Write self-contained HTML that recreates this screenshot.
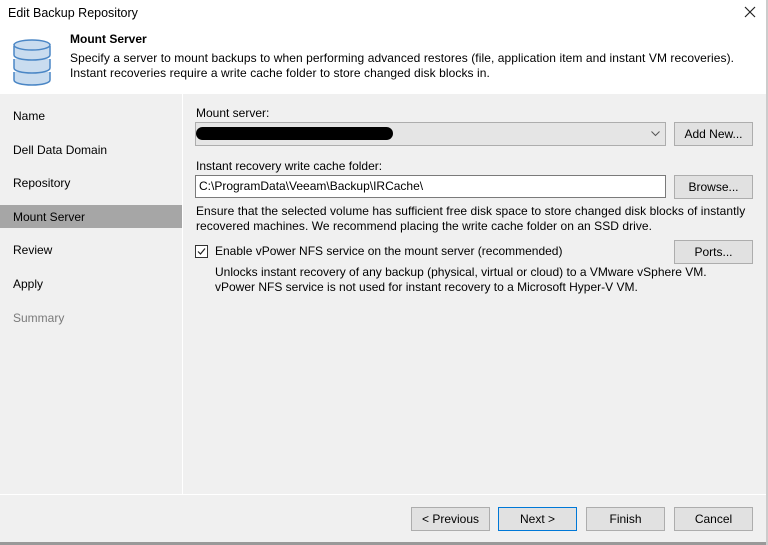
<!DOCTYPE html>
<html><head><style>
body{margin:0;width:768px;height:545px;overflow:hidden;background:#fff;font-family:"Liberation Sans",sans-serif;font-size:12px;color:#000;position:relative}
.a{position:absolute;white-space:nowrap}
.btn{position:absolute;background:#e1e1e1;border:1px solid #adadad;box-sizing:border-box;text-align:center;font-size:12px;line-height:22px}
</style></head><body>
<div class="a" style="left:8px;top:6px;font-size:12.5px">Edit Backup Repository</div>
<svg class="a" style="left:744px;top:6px" width="12" height="12" viewBox="0 0 12 12"><path d="M1 1L11 11M11 1L1 11" stroke="#222" stroke-width="1.2"/></svg>
<svg class="a" style="left:12px;top:38px" width="40" height="50" viewBox="0 0 40 50">
<g fill="#c9dcef" stroke="#4a86c5" stroke-width="1.5">
<path d="M2 34v8c0 3 8 5 18 5s18-2 18-5v-8"/>
<path d="M2 21v9c0 3 8 5 18 5s18-2 18-5v-9"/>
<path d="M2 8v9c0 3 8 5 18 5s18-2 18-5V8"/>
<ellipse cx="20" cy="7" rx="18" ry="5"/>
</g></svg>
<div class="a" style="left:70px;top:32px;font-weight:bold">Mount Server</div>
<div class="a" style="left:70px;top:51px;letter-spacing:0.08px">Specify a server to mount backups to when performing advanced restores (file, application item and instant VM recoveries).</div>
<div class="a" style="left:70px;top:66px;letter-spacing:0.08px">Instant recoveries require a write cache folder to store changed disk blocks in.</div>
<div class="a" style="left:0;top:94px;width:766px;height:448px;background:#f0f0f0"></div>
<div class="a" style="left:182px;top:94px;width:1px;height:400px;background:#fff"></div>
<div class="a" style="left:0;top:494px;width:766px;height:1px;background:#fff"></div>
<div class="a" style="left:0;top:542px;width:768px;height:3px;background:#999"></div>
<div class="a" style="left:766px;top:0;width:2px;height:545px;background:#ccc"></div>
<div class="a" style="left:0;top:205px;width:182px;height:23px;background:#a6a6a6"></div>
<div class="a" style="left:13px;top:109px">Name</div>
<div class="a" style="left:13px;top:143px">Dell Data Domain</div>
<div class="a" style="left:13px;top:176px">Repository</div>
<div class="a" style="left:13px;top:210px">Mount Server</div>
<div class="a" style="left:13px;top:243px">Review</div>
<div class="a" style="left:13px;top:277px">Apply</div>
<div class="a" style="left:13px;top:311px;color:#7a7a7a">Summary</div>
<div class="a" style="left:196px;top:106px">Mount server:</div>
<div class="a" style="left:195px;top:122px;width:471px;height:24px;background:#e5e5e5;border:1px solid #adadad;box-sizing:border-box"></div>
<div class="a" style="left:196px;top:127px;width:197px;height:13px;background:#000;border-radius:7px"></div>
<svg class="a" style="left:651px;top:131px" width="9" height="6" viewBox="0 0 9 6"><path d="M0.5 0.5L4.5 4.5L8.5 0.5" fill="none" stroke="#555"/></svg>
<div class="btn" style="left:674px;top:122px;width:79px;height:24px">Add New...</div>
<div class="a" style="left:196px;top:159px">Instant recovery write cache folder:</div>
<div class="a" style="left:195px;top:175px;width:471px;height:23px;background:#fff;border:1px solid #7a7a7a;box-sizing:border-box;padding:3px 3px;line-height:15px">C:\ProgramData\Veeam\Backup\IRCache\</div>
<div class="btn" style="left:674px;top:175px;width:79px;height:24px">Browse...</div>
<div class="a" style="left:196px;top:204px;letter-spacing:0.05px">Ensure that the selected volume has sufficient free disk space to store changed disk blocks of instantly</div>
<div class="a" style="left:196px;top:219px;letter-spacing:0.05px">recovered machines. We recommend placing the write cache folder on an SSD drive.</div>
<div class="a" style="left:195px;top:245px;width:13px;height:13px;border:1px solid #333;background:#fff;box-sizing:border-box"></div>
<svg class="a" style="left:197px;top:247px" width="9" height="9" viewBox="0 0 9 9"><path d="M1 4.5L3.5 7L8 1.5" fill="none" stroke="#222" stroke-width="1.2"/></svg>
<div class="a" style="left:215px;top:244px">Enable vPower NFS service on the mount server (recommended)</div>
<div class="btn" style="left:674px;top:240px;width:79px;height:24px">Ports...</div>
<div class="a" style="left:215px;top:265px">Unlocks instant recovery of any backup (physical, virtual or cloud) to a VMware vSphere VM.</div>
<div class="a" style="left:215px;top:280px">vPower NFS service is not used for instant recovery to a Microsoft Hyper-V VM.</div>
<div class="btn" style="left:411px;top:507px;width:79px;height:24px">&lt; Previous</div>
<div class="btn" style="left:498px;top:507px;width:79px;height:24px;border:1px solid #0078d7">Next &gt;</div>
<div class="btn" style="left:586px;top:507px;width:79px;height:24px">Finish</div>
<div class="btn" style="left:674px;top:507px;width:79px;height:24px">Cancel</div>
</body></html>
